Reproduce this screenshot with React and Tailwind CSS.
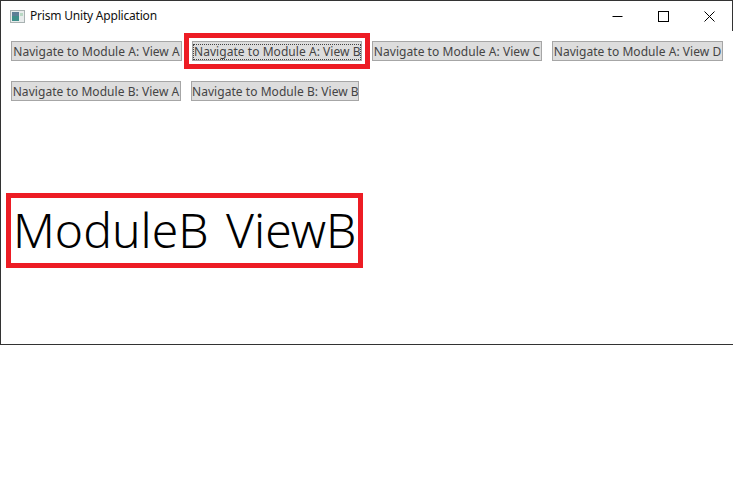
const uiFont = { fontFamily: '"Noto Sans", "Noto Sans CJK KR", sans-serif' };

function NavButton({ label, width, focused }) {
  return (
    <div className="relative">
      <button
        className={`block h-[20px] ${width} border border-[#a6a6a6] bg-[#dddddd] text-[12px] tracking-[0.05px] leading-[17px] text-[#444] whitespace-nowrap overflow-hidden text-center`}
      >
        {focused ? (
          <span className="block h-[16px] mt-[1px] border border-dotted border-[#444] leading-[14px] text-left">{label}</span>
        ) : (
          label
        )}
      </button>
      {focused && (
        <div className="absolute -left-[8px] -top-[8px] w-[186px] h-[36px] border-[5px] border-[#ed1c24]" />
      )}
    </div>
  );
}

function App() {
  return (
    <div className="w-[733px] h-[488px] bg-white overflow-hidden" style={uiFont}>
      <div className="relative h-[345px] border-l border-t border-b border-[#333]">
        {/* right edge only shows next to the title bar */}
        <div className="absolute right-0 top-0 w-px h-[30px] bg-[#333]" />

        {/* Title bar */}
        <div className="flex items-center h-[30px]">
          <svg className="ml-[9px]" width="15" height="13" viewBox="0 0 15 13">
            <rect x="0.5" y="0.5" width="14" height="12" fill="#e8ecec" stroke="#a9b2b2" />
            <rect x="2" y="2" width="7" height="9" fill="#3f8f8a" />
            <rect x="2" y="2" width="7" height="4" fill="#5d7f96" />
            <rect x="10" y="3" width="3" height="3" fill="#b9d9c4" />
          </svg>
          <span className="ml-[5px] text-[12px] tracking-[-0.2px] text-[#111]">Prism Unity Application</span>
          <div className="ml-auto flex items-center mr-[1px]">
            <div className="w-[46px] h-[30px] flex items-center justify-center">
              <svg width="11" height="11" viewBox="0 0 11 11">
                <path d="M0.5 5.5H10.5" stroke="#000" fill="none" />
              </svg>
            </div>
            <div className="w-[46px] h-[30px] flex items-center justify-center">
              <svg width="11" height="11" viewBox="0 0 11 11">
                <rect x="0.5" y="0.5" width="10" height="10" stroke="#000" fill="none" />
              </svg>
            </div>
            <div className="w-[46px] h-[30px] flex items-center justify-center">
              <svg width="11" height="11" viewBox="0 0 11 11">
                <path d="M0.5 0.5L10.5 10.5M10.5 0.5L0.5 10.5" stroke="#000" fill="none" />
              </svg>
            </div>
          </div>
        </div>

        {/* Buttons */}
        <div className="pl-[10px] pt-[10px] flex flex-col gap-[20px]">
          <div className="flex gap-[10px]">
            <NavButton label="Navigate to Module A: View A" width="w-[171px]" />
            <NavButton label="Navigate to Module A: View B" width="w-[170px]" focused />
            <NavButton label="Navigate to Module A: View C" width="w-[170px]" />
            <NavButton label="Navigate to Module A: View D" width="w-[171px]" />
          </div>
          <div className="flex gap-[10px]">
            <NavButton label="Navigate to Module B: View A" width="w-[170px]" />
            <NavButton label="Navigate to Module B: View B" width="w-[168px]" />
          </div>
        </div>

        {/* Active view */}
        <div className="ml-[5px] mt-[92px] w-[357px] h-[75px] border-[5px] border-[#ed1c24] flex items-center whitespace-nowrap">
          <span className="ml-[2px] mb-[2px] text-[48px] font-[350] tracking-[0px] [word-spacing:5px] leading-none text-black">ModuleB ViewB</span>
        </div>
      </div>
    </div>
  );
}

export default App;
